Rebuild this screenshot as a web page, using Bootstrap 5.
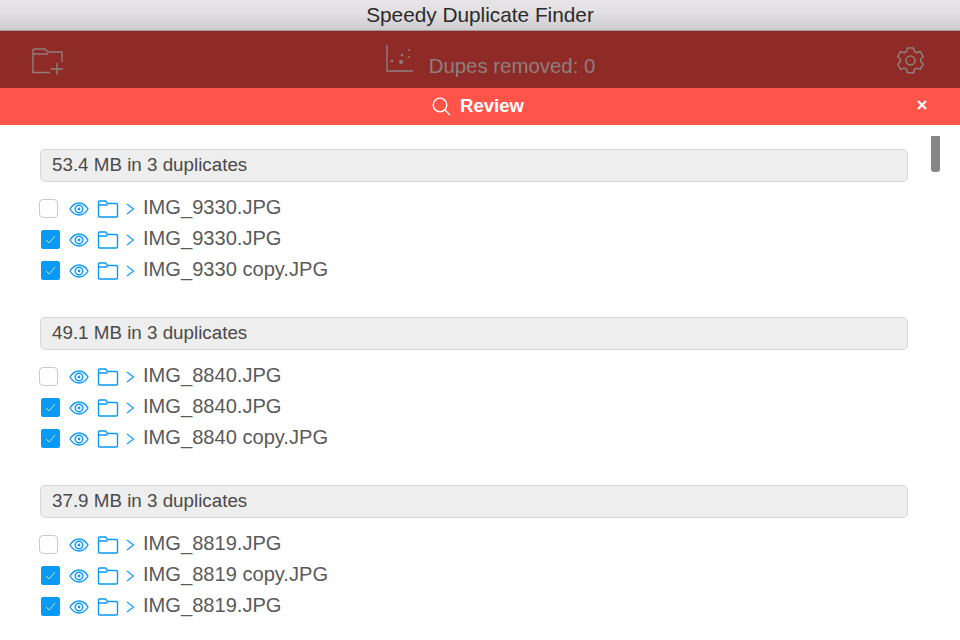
<!DOCTYPE html>
<html lang="en">
<head>
<meta charset="utf-8">
<title>Speedy Duplicate Finder</title>
<link href="https://cdn.jsdelivr.net/npm/bootstrap@5.3.0/dist/css/bootstrap.min.css" rel="stylesheet">
<style>
html,body{height:640px;overflow:hidden;background:#fff;font-family:"Liberation Sans",Arial,sans-serif}
.app-frame{width:960px;height:640px;overflow:hidden;position:relative}
.title-bar{height:31px;background:linear-gradient(#e6e4e7,#e2e0e3 40%,#cfcccf);border-bottom:1px solid #a09c9e;color:#2a2a2a;font-size:20.8px;line-height:29px}
.tool-bar{height:57px;background:#8e2b27;color:#8f7f7e;padding:0 35px 0 32px}
.tool-bar svg{margin-top:2px}
.stat-group{margin-left:18px}
.tool-bar .stat-icon{margin:0 15px 0 2px}
.tool-stat{font-size:20.4px;margin-top:13px}
.review-bar{height:37px;padding-bottom:1px;background:#ff544a;color:#fff;font-size:18.5px;font-weight:700;position:relative}
.review-bar .search-glyph{margin-left:-4px;margin-right:9px}
.review-close{position:absolute;right:32px;top:11px;width:12px;height:12px;display:block}
.list-area{padding:24px 52px 0 40px}
.dupe-group{margin-bottom:31px}
.dupe-head{height:33px;background:#eeeeee;border:1px solid #d6d6d6;border-radius:5px;padding:0 11px;font-size:18.8px;line-height:30px;color:#4a4a4a;margin-bottom:11px}
.dupe-row{height:31px;color:#5a5a5a;font-size:20.1px;line-height:31px}
.dupe-check{width:19px;height:19px;margin:6px 11px 0 -1px;flex:none;border:1px solid #c8c8c8;border-radius:4px;background:#fff}
.dupe-check.on{background:#0a99f5;border-color:#0a99f5;margin:6px 9px 0 1px;border-radius:2px;display:flex;align-items:center;justify-content:center}
.row-icons{margin-top:6px;flex:none}
.file-name{margin-left:6px;margin-top:-1px}
.scroll-thumb{position:absolute;left:931px;top:136px;width:9px;height:36px;background:#868686;border-radius:0 0 3px 3px}
</style>
</head>
<body>
<div class="app-frame">
  <div class="title-bar text-center">Speedy Duplicate Finder</div>
  <div class="tool-bar d-flex align-items-center justify-content-between">
    <svg width="32" height="28" viewBox="0 0 32 28" fill="none" stroke="#8f7f7e" stroke-width="1.4"><path d="M1 26V3a1 1 0 0 1 1-1h11l3 3h14v10M1 7h15M1 25.500h17"/><path d="M19 22h12M25 16v12"/></svg>
    <div class="stat-group d-flex align-items-center">
      <svg width="29" height="30" viewBox="0 0 29 30" fill="none" stroke="#8f7f7e" stroke-width="1.4" class="stat-icon"><path d="M2 1v26h26"/><circle cx="7" cy="17" r="1.300" fill="#8f7f7e" stroke="none"/><circle cx="16" cy="18" r="2" fill="#8f7f7e" stroke="none"/><circle cx="17" cy="11" r="1.300" fill="#8f7f7e" stroke="none"/><circle cx="24" cy="6" r="1" fill="#8f7f7e" stroke="none"/><circle cx="24" cy="13" r="1" fill="#8f7f7e" stroke="none"/></svg>
      <span class="tool-stat">Dupes removed: 0</span>
    </div>
    <svg width="29" height="29" viewBox="0 0 29 29" fill="none" stroke="#8f7f7e" stroke-width="1.5" stroke-linejoin="round"><path d="M11.500 2h6l1 3.500 2.500 1.200 3.300-1.300 3 5.200-2.600 2.400v2.800l2.600 2.400-3 5.200-3.300-1.300-2.500 1.200-1 3.500h-6l-1-3.500-2.500-1.200-3.300 1.300-3-5.200 2.600-2.400v-2.800L1.700 10.600l3-5.200L8 6.700l2.500-1.200z"/><circle cx="14.500" cy="14.500" r="4.500"/></svg>
  </div>
  <div class="review-bar d-flex align-items-center justify-content-center">
    <svg width="19" height="19" viewBox="0 0 19 19" fill="none" stroke="#fff" stroke-width="1.300" class="search-glyph"><circle cx="8" cy="8" r="6.800"/><path d="M13 13l5 5"/></svg>
    <span>Review</span>
    <svg class="review-close" viewBox="0 0 12 12" stroke="#fff" stroke-width="2.200"><path d="M2 2l8 8M10 2l-8 8"/></svg>
  </div>
  <div class="list-area" id="list"></div>
  <div class="scroll-thumb"></div>
</div>
<script>
var icons='<svg class="row-icons" width="68" height="20" viewBox="0 0 68 20" fill="none" stroke="#0a99f5" stroke-width="1.400"><path d="M1 10c2.500-4 5.500-6 9-6s6.500 2 9 6c-2.500 4-5.500 6-9 6s-6.500-2-9-6z"/><circle cx="10" cy="10" r="3.800"/><circle cx="10" cy="10" r="1.400" fill="#0a99f5" stroke="none"/><path d="M29.500 17V3a1 1 0 0 1 1-1h6l2 2.500h9a1 1 0 0 1 1 1V17a1 1 0 0 1-1 1h-17a1 1 0 0 1-1-1zM29.500 6h9"/><path d="M58 5l6.500 5L58 15" stroke-width="1.100"/></svg>';
var tick='<svg width="11" height="9" viewBox="0 0 11 9" fill="none" stroke="#bfe2fc" stroke-width="1"><path d="M1 5l3 3 6-7"/></svg>';
var data=[["53.4 MB in 3 duplicates",["IMG_9330.JPG","IMG_9330.JPG","IMG_9330 copy.JPG"]],
["49.1 MB in 3 duplicates",["IMG_8840.JPG","IMG_8840.JPG","IMG_8840 copy.JPG"]],
["37.9 MB in 3 duplicates",["IMG_8819.JPG","IMG_8819 copy.JPG","IMG_8819.JPG"]]];
document.getElementById('list').innerHTML=data.map(function(g){
 return '<section class="dupe-group"><div class="dupe-head">'+g[0]+'</div>'+g[1].map(function(n,i){
  return '<div class="dupe-row d-flex align-items-start"><span class="dupe-check'+(i?' on':'')+'">'+(i?tick:'')+'</span>'+icons+'<span class="file-name">'+n+'</span></div>';
 }).join('')+'</section>';
}).join('');
</script>
<script src="https://cdn.jsdelivr.net/npm/bootstrap@5.3.0/dist/js/bootstrap.bundle.min.js"></script>
</body>
</html>
